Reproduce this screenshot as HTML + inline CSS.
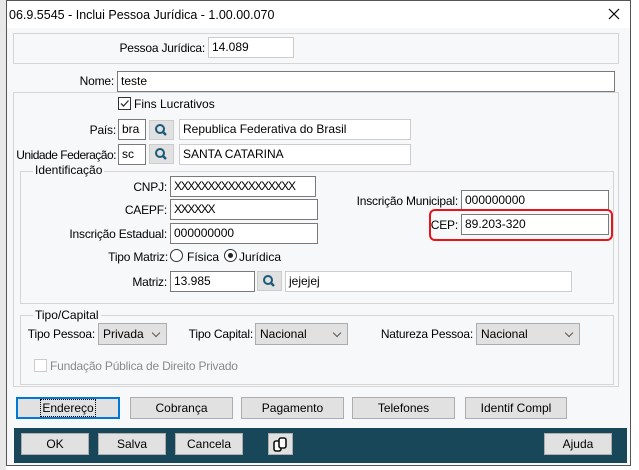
<!DOCTYPE html>
<html><head><meta charset="utf-8"><style>
*{box-sizing:border-box;margin:0;padding:0}
body{width:639px;height:470px;background:#fff;font-family:"Liberation Sans",sans-serif;font-size:12px;color:#000;position:relative;overflow:hidden}
.a{position:absolute}
.win{left:6px;top:0;width:625px;height:466px;border:1px solid #555;background:#f7f8fa}
.title{left:7px;top:1px;width:623px;height:27px;background:#fff}
.in{position:absolute;background:#fff;border:1px solid #7a7a7a;height:21px;line-height:19px;padding-left:3px;white-space:nowrap;overflow:hidden}
.in.l{border-color:#ccc}
.lb{position:absolute;white-space:nowrap;line-height:14px}
.r{position:absolute;white-space:nowrap;line-height:14px;text-align:right;letter-spacing:-0.2px}
.sb{position:absolute;width:25px;height:20px;background:#e1e1e1;border:1px solid #ccc}
.grp{position:absolute;border:1px solid #d5d5d5}
.leg{position:absolute;background:#f7f8fa;padding:0 2px;line-height:14px}
.btn{position:absolute;height:22px;background:#e1e1e1;border:1px solid #adadad;text-align:center;line-height:20px}
.sel{position:absolute;height:22px;background:#e1e1e1;border:1px solid #adadad;line-height:20px;padding-left:4px}
.sel:after{content:"";position:absolute;right:7px;top:6px;width:5px;height:5px;border-right:1px solid #555;border-bottom:1px solid #555;transform:rotate(45deg)}
.rad{position:absolute;width:13px;height:13px;border:1px solid #333;border-radius:50%;background:#fff}
</style></head><body>
<div class="a" style="left:0;top:0;width:6px;height:470px;background:#e8e8e8"></div>
<div class="a win"></div>
<div class="a title"></div>
<div class="lb" style="left:9px;top:8px;font-size:12.5px">06.9.5545 - Inclui Pessoa Jurídica - 1.00.00.070</div>
<svg class="a" style="left:608px;top:8px" width="12" height="12"><path d="M1 1L11 11M11 1L1 11" stroke="#000" stroke-width="1.2"/></svg>

<div class="grp" style="left:13px;top:33px;width:606px;height:31px"></div>
<div class="r" style="right:434px;top:41px">Pessoa Jurídica:</div>
<div class="in l" style="left:208px;top:37px;width:86px">14.089</div>

<div class="r" style="right:525px;top:74px">Nome:</div>
<div class="in" style="left:117px;top:71px;width:498px">teste</div>
<div class="grp" style="left:13px;top:92px;width:606px;height:295px"></div>

<div class="a" style="left:118px;top:97px;width:13px;height:13px;border:1px solid #333;background:#fff"></div>
<svg class="a" style="left:119px;top:98px" width="11" height="11"><path d="M2 5.5L4.5 8L9.5 2.5" stroke="#333" fill="none" stroke-width="1.3"/></svg>
<div class="lb" style="left:134px;top:97px">Fins Lucrativos</div>

<div class="r" style="right:523px;top:123px">País:</div>
<div class="in" style="left:118px;top:119px;width:28px">bra</div>
<div class="sb" style="left:149px;top:120px"></div>
<div class="in l" style="left:179px;top:119px;width:232px">Republica Federativa do Brasil</div>
<div class="r" style="right:523px;top:148px;letter-spacing:-0.5px">Unidade Federação:</div>
<div class="in" style="left:118px;top:144px;width:28px">sc</div>
<div class="sb" style="left:149px;top:144px"></div>
<div class="in l" style="left:179px;top:144px;width:232px">SANTA CATARINA</div>

<div class="grp" style="left:20px;top:171px;width:594px;height:133px"></div>
<div class="leg" style="left:33px;top:163px">Identificação</div>
<div class="r" style="right:472px;top:180px">CNPJ:</div>
<div class="in" style="left:170px;top:176px;width:146px;font-size:12px;letter-spacing:-1.3px">XXXXXXXXXXXXXXXXXX</div>
<div class="r" style="right:472px;top:203px">CAEPF:</div>
<div class="in" style="left:170px;top:199px;width:148px;font-size:12px;letter-spacing:-1.3px">XXXXXX</div>
<div class="r" style="right:472px;top:227px">Inscrição Estadual:</div>
<div class="in" style="left:170px;top:223px;width:148px">000000000</div>
<div class="r" style="right:471px;top:250px">Tipo Matriz:</div>
<div class="rad" style="left:170px;top:249px"></div>
<div class="lb" style="left:187px;top:250px">Física</div>
<div class="rad" style="left:224px;top:249px"></div>
<div class="a" style="left:228px;top:253px;width:5px;height:5px;border-radius:50%;background:#222"></div>
<div class="lb" style="left:239px;top:250px">Jurídica</div>
<div class="r" style="right:472px;top:275px">Matriz:</div>
<div class="in" style="left:170px;top:271px;width:85px">13.985</div>
<div class="sb" style="left:257px;top:271px"></div>
<div class="in l" style="left:285px;top:271px;width:287px">jejejej</div>

<div class="r" style="right:181px;top:194px">Inscrição Municipal:</div>
<div class="in" style="left:461px;top:190px;width:148px">000000000</div>
<div class="a" style="left:429px;top:209px;width:184px;height:32px;border:2px solid #e8141b;border-radius:6px"></div>
<div class="r" style="right:181px;top:218px">CEP:</div>
<div class="in" style="left:461px;top:214px;width:148px">89.203-320</div>

<div class="grp" style="left:20px;top:315px;width:594px;height:70px"></div>
<div class="leg" style="left:33px;top:308px">Tipo/Capital</div>
<div class="r" style="right:544px;top:327px">Tipo Pessoa:</div>
<div class="sel" style="left:98px;top:323px;width:69px">Privada</div>
<div class="r" style="right:386px;top:327px">Tipo Capital:</div>
<div class="sel" style="left:255px;top:323px;width:93px">Nacional</div>
<div class="r" style="right:166px;top:327px">Natureza Pessoa:</div>
<div class="sel" style="left:476px;top:323px;width:104px">Nacional</div>
<div class="a" style="left:34px;top:359px;width:13px;height:13px;border:1px solid #ccc;background:#fff"></div>
<div class="lb" style="left:50px;top:359px;color:#8a8a8a;letter-spacing:-0.2px">Fundação Pública de Direito Privado</div>

<div class="btn" style="left:16px;top:397px;width:104px;border:2px solid #0078d7;line-height:18px"><span style="outline:1px dotted #000;outline-offset:1px">Endereço</span></div>
<div class="btn" style="left:130px;top:397px;width:103px">Cobrança</div>
<div class="btn" style="left:241px;top:397px;width:103px">Pagamento</div>
<div class="btn" style="left:352px;top:397px;width:103px">Telefones</div>
<div class="btn" style="left:465px;top:397px;width:102px">Identif Compl</div>

<div class="a" style="left:14px;top:428px;width:613px;height:35px;background:#19475a"></div>
<div class="btn" style="left:21px;top:433px;width:68px">OK</div>
<div class="btn" style="left:98px;top:433px;width:68px">Salva</div>
<div class="btn" style="left:175px;top:433px;width:68px">Cancela</div>
<div class="btn" style="left:268px;top:433px;width:25px"></div>
<svg class="a" style="left:272px;top:436px" width="17" height="17"><rect x="2" y="5" width="7" height="10" rx="2" fill="#fff" stroke="#111" stroke-width="1.6"/><rect x="7" y="2" width="7" height="10" rx="2" fill="#fff" stroke="#111" stroke-width="1.6"/></svg>
<div class="btn" style="left:544px;top:433px;width:68px">Ajuda</div>

<svg class="a" style="left:153px;top:123px" width="16" height="14"><circle cx="7" cy="6" r="4" fill="none" stroke="#1a5a7a" stroke-width="2"/><path d="M10 9L13 12" stroke="#1a5a7a" stroke-width="2.4"/></svg>
<svg class="a" style="left:153px;top:147px" width="16" height="14"><circle cx="7" cy="6" r="4" fill="none" stroke="#1a5a7a" stroke-width="2"/><path d="M10 9L13 12" stroke="#1a5a7a" stroke-width="2.4"/></svg>
<svg class="a" style="left:261px;top:274px" width="16" height="14"><circle cx="7" cy="6" r="4" fill="none" stroke="#1a5a7a" stroke-width="2"/><path d="M10 9L13 12" stroke="#1a5a7a" stroke-width="2.4"/></svg>
</body></html>
